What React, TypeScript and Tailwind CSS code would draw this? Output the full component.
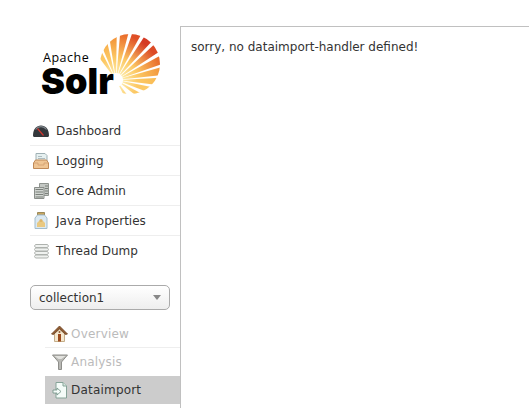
const font = "font-['DejaVu_Sans',sans-serif]";

// angle from the foot of the r, outer colour of the ray
const rays = [
  [-122, "#f9bc58"],
  [-108, "#f6a03c"],
  [-94, "#f18a30"],
  [-80, "#ea6c2a"],
  [-66, "#df4f26"],
  [-52, "#d53a24"],
  [-38, "#dc4a26"],
  [-24, "#e96f2c"],
  [-11, "#f2953a"],
  [2, "#f9b850"],
  [16, "#fccc6c"],
  [33, "#fdd684"],
  [58, "#fde09a"],
] as const;

function Sun() {
  return (
    <svg width="62" height="62" viewBox="100 33 62 62" className="absolute left-[100px] top-[33px]">
      <defs>
        <clipPath id="disc">
          <circle cx="130" cy="64" r="30" />
        </clipPath>
        {rays.map((r, i) => (
          <linearGradient key={i} id={`ray${i}`} gradientUnits="userSpaceOnUse" x1="6" y1="0" x2="46" y2="0">
            <stop offset="0" stopColor="#feecaa" />
            <stop offset="0.4" stopColor="#fcc864" />
            <stop offset="1" stopColor={r[1]} />
          </linearGradient>
        ))}
      </defs>
      <g clipPath="url(#disc)">
        {rays.map((r, i) => (
          <polygon
            key={i}
            points="7,-0.6 70,-6 70,6 7,0.6"
            fill={`url(#ray${i})`}
            transform={`translate(116 80) rotate(${r[0]})`}
          />
        ))}
      </g>
    </svg>
  );
}

function Logo() {
  return (
    <div className="relative h-[116px] w-[180px] shrink-0">
      <Sun />
      <div className="absolute left-[43px] top-[50px] font-['Open_Sans',sans-serif] text-[12.5px] leading-[15px] font-medium tracking-[0.5px] text-black">
        Apache
      </div>
      <div className="absolute left-[41px] top-[67px] font-['Inter',sans-serif] text-[36px] leading-[28px] font-black text-black">
        Solr
      </div>
    </div>
  );
}

function DashIcon() {
  return (
    <svg width="16" height="12" viewBox="0 0 16 12">
      <path d="M0 10.5 C0 4 3.5 0.5 8 0.5 C12.5 0.5 16 4 16 10.5 C16 11.5 15.2 12 14 12 L2 12 C0.8 12 0 11.5 0 10.5 Z" fill="#33373b" />
      <path d="M2.5 4.5 C4 2.5 6 1.6 8 1.6 C10 1.6 12 2.5 13.5 4.5" fill="none" stroke="#7b8288" strokeWidth="1.2" />
      <path d="M4.5 3.5 L10.5 10.5" stroke="#d0352f" strokeWidth="1.2" />
    </svg>
  );
}

function LogIcon() {
  return (
    <svg width="16" height="16" viewBox="0 0 16 16">
      <path d="M3 0.5 H12 L14 2.5 V9 H3 Z" fill="#e6f0f0" stroke="#9fb0b4" />
      <path d="M5 3.5 H9 M5 5.5 H12" stroke="#aebcc0" />
      <path d="M2.5 7 H13.5 L15.5 10 V15.5 H0.5 V10 Z" fill="#efc594" stroke="#c08a58" />
      <path d="M1 10 H5 V12 H11 V10 H15" fill="none" stroke="#d7a474" />
    </svg>
  );
}

function CoreIcon() {
  return (
    <svg width="15" height="16" viewBox="0 0 15 16">
      <path d="M5.5 0.5 H14.5 V12.5 H5.5 Z" fill="#c4c8c4" stroke="#8f948f" />
      <path d="M0.5 4.5 H10 V15.5 H0.5 Z" fill="#d0d4d0" stroke="#8a8e8a" />
      <path d="M1.5 6.5 H9 M1.5 9 H9 M1.5 11.5 H9 M1.5 14 H9 M11 3 H14 M11 5.5 H14 M11 8 H14 M11 10.5 H14" stroke="#7b807b" />
    </svg>
  );
}

function JavaIcon() {
  return (
    <svg width="14" height="17" viewBox="0 0 14 17">
      <path d="M3.5 0.5 H10.5 V3 H3.5 Z" fill="#c9a65e" stroke="#9c8a5a" />
      <path d="M3.5 3 H10.5 L13 6 V16.5 H1 V6 Z" fill="#dbe9f2" stroke="#a3bdcc" />
      <path d="M3 15 V11 L5 9 H9 L11 11 V15 Z" fill="#e9c982" />
      <circle cx="7" cy="8.5" r="1.6" fill="#dcb46a" />
    </svg>
  );
}

function ThreadIcon() {
  return (
    <svg width="15" height="15" viewBox="0 0 15 15" fill="#f0f2f0" stroke="#aeb2ae">
      <path d="M1.5 0.5 H13.5 L14.5 2 L13.5 3.5 H1.5 L0.5 2 Z" />
      <path d="M1.5 4 H13.5 L14.5 5.5 L13.5 7 H1.5 L0.5 5.5 Z" />
      <path d="M1.5 7.5 H13.5 L14.5 9 L13.5 10.5 H1.5 L0.5 9 Z" />
      <path d="M1.5 11 H13.5 L14.5 12.5 L13.5 14 H1.5 L0.5 12.5 Z" />
    </svg>
  );
}

function HomeIcon() {
  return (
    <svg width="17" height="17" viewBox="0 0 17 17">
      <path d="M3.5 8 L8.5 3.5 L13.5 8 V16.5 H3.5 Z" fill="#f5e8d0" stroke="#c4ad88" />
      <path d="M0.5 9 L8.5 1 L16.5 9 L14.5 9.5 L8.5 4 L2.5 9.5 Z" fill="#8e5a32" stroke="#6e4522" strokeWidth="0.8" />
      <path d="M7 9 H10 V16.5 H7 Z" fill="#9c4a1c" />
      <circle cx="8.5" cy="7" r="1" fill="#8e5a32" />
    </svg>
  );
}

function FilterIcon() {
  return (
    <svg width="16" height="16" viewBox="0 0 16 16">
      <path d="M0.5 1 H15.5 L9.5 8 V15.5 H6.5 V8 Z" fill="#b8b8b4" stroke="#8e8e8a" />
      <path d="M2.5 2 H13.5 L9.5 5 H6.5 Z" fill="#e2e2de" />
    </svg>
  );
}

function ImportIcon() {
  return (
    <svg width="16" height="17" viewBox="0 0 16 17">
      <path d="M4 0.5 H11 L14.5 4 V16 H4 Z" fill="#f4fbf8" stroke="#86a398" />
      <path d="M11 0.5 V4 H14.5" fill="#d8e8e0" stroke="#86a398" />
      <path d="M1 8 H5 V6 L9 9.5 L5 13 V11 H1 Z" fill="#f4fbf8" stroke="#6f9184" strokeWidth="0.8" />
    </svg>
  );
}

const mainNav = [
  { label: "Dashboard", icon: <DashIcon /> },
  { label: "Logging", icon: <LogIcon /> },
  { label: "Core Admin", icon: <CoreIcon /> },
  { label: "Java Properties", icon: <JavaIcon /> },
  { label: "Thread Dump", icon: <ThreadIcon /> },
];

export default function App() {
  return (
    <div className={`flex h-[408px] w-[529px] overflow-hidden bg-white ${font}`}>
      <aside className="flex w-[180px] shrink-0 flex-col">
        <Logo />
        <nav className="ml-[30px] flex flex-col">
          {mainNav.map((item, i) => (
            <a
              key={item.label}
              className={`flex h-[30px] items-center text-[12px] text-[#333] ${i < mainNav.length - 1 ? "border-b border-[#eee]" : ""}`}
            >
              <span className="flex w-[26px] justify-center pr-[4px]">{item.icon}</span>
              {item.label}
            </a>
          ))}
        </nav>
        <div className="ml-[30px] mt-[19px] flex h-[25px] w-[140px] items-center justify-between rounded-[5px] border border-[#aaa] bg-gradient-to-b from-white to-[#eee] px-[8px] text-[12px] text-[#333]">
          collection1
          <span className="h-0 w-0 border-x-[4px] border-t-[5px] border-x-transparent border-t-[#888]" />
        </div>
        <nav className="ml-[45px] mt-[10px] flex flex-col text-[12px] tracking-[0.2px]">
          <a className="flex h-[28px] items-center border-b border-[#eee] text-[#bbb]">
            <span className="ml-[6px] mr-[3px] flex w-[17px] justify-center"><HomeIcon /></span>
            Overview
          </a>
          <a className="flex h-[28px] items-center text-[#bbb]">
            <span className="ml-[6px] mr-[3px] flex w-[17px] justify-center"><FilterIcon /></span>
            Analysis
          </a>
          <a className="flex h-[28px] items-center bg-[#ccc] text-[#333]">
            <span className="ml-[6px] mr-[3px] flex w-[17px] justify-center"><ImportIcon /></span>
            Dataimport
          </a>
        </nav>
      </aside>
      <main className="mt-[26px] flex-1 border-l border-t border-[#c0c0c0] px-[10px] py-[10px] text-[12px] leading-[20px] text-[#333]">
        sorry, no dataimport-handler defined!
      </main>
    </div>
  );
}
